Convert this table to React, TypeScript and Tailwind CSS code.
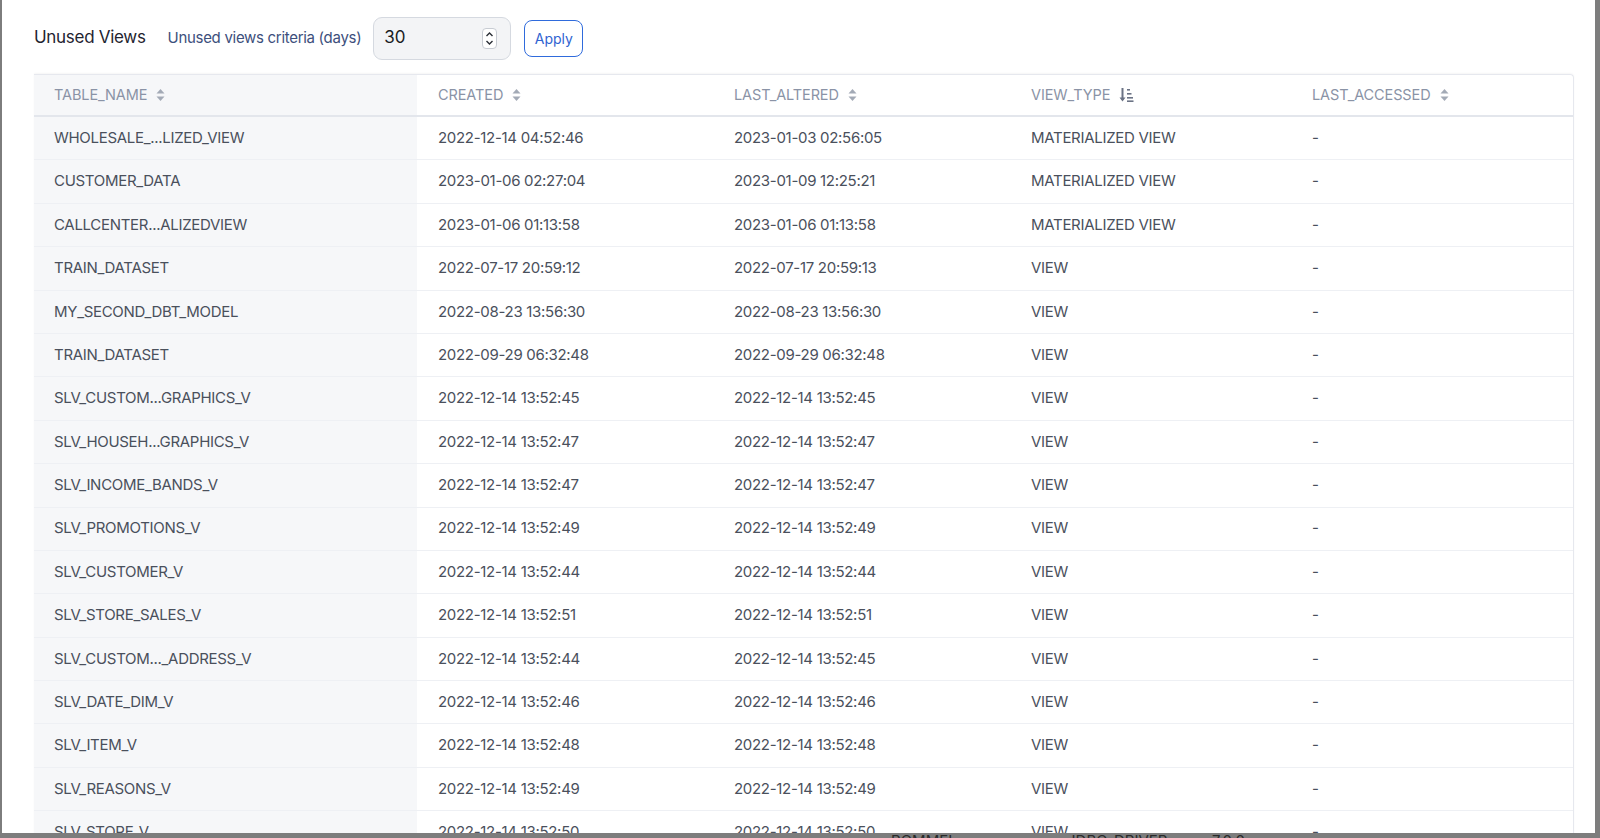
import React from 'react';

type Row = {
  name: string;
  created: string;
  altered: string;
  type: string;
  accessed: string;
};

const rows: Row[] = [
  { name: 'WHOLESALE_...LIZED_VIEW', created: '2022-12-14 04:52:46', altered: '2023-01-03 02:56:05', type: 'MATERIALIZED VIEW', accessed: '-' },
  { name: 'CUSTOMER_DATA', created: '2023-01-06 02:27:04', altered: '2023-01-09 12:25:21', type: 'MATERIALIZED VIEW', accessed: '-' },
  { name: 'CALLCENTER...ALIZEDVIEW', created: '2023-01-06 01:13:58', altered: '2023-01-06 01:13:58', type: 'MATERIALIZED VIEW', accessed: '-' },
  { name: 'TRAIN_DATASET', created: '2022-07-17 20:59:12', altered: '2022-07-17 20:59:13', type: 'VIEW', accessed: '-' },
  { name: 'MY_SECOND_DBT_MODEL', created: '2022-08-23 13:56:30', altered: '2022-08-23 13:56:30', type: 'VIEW', accessed: '-' },
  { name: 'TRAIN_DATASET', created: '2022-09-29 06:32:48', altered: '2022-09-29 06:32:48', type: 'VIEW', accessed: '-' },
  { name: 'SLV_CUSTOM...GRAPHICS_V', created: '2022-12-14 13:52:45', altered: '2022-12-14 13:52:45', type: 'VIEW', accessed: '-' },
  { name: 'SLV_HOUSEH...GRAPHICS_V', created: '2022-12-14 13:52:47', altered: '2022-12-14 13:52:47', type: 'VIEW', accessed: '-' },
  { name: 'SLV_INCOME_BANDS_V', created: '2022-12-14 13:52:47', altered: '2022-12-14 13:52:47', type: 'VIEW', accessed: '-' },
  { name: 'SLV_PROMOTIONS_V', created: '2022-12-14 13:52:49', altered: '2022-12-14 13:52:49', type: 'VIEW', accessed: '-' },
  { name: 'SLV_CUSTOMER_V', created: '2022-12-14 13:52:44', altered: '2022-12-14 13:52:44', type: 'VIEW', accessed: '-' },
  { name: 'SLV_STORE_SALES_V', created: '2022-12-14 13:52:51', altered: '2022-12-14 13:52:51', type: 'VIEW', accessed: '-' },
  { name: 'SLV_CUSTOM..._ADDRESS_V', created: '2022-12-14 13:52:44', altered: '2022-12-14 13:52:45', type: 'VIEW', accessed: '-' },
  { name: 'SLV_DATE_DIM_V', created: '2022-12-14 13:52:46', altered: '2022-12-14 13:52:46', type: 'VIEW', accessed: '-' },
  { name: 'SLV_ITEM_V', created: '2022-12-14 13:52:48', altered: '2022-12-14 13:52:48', type: 'VIEW', accessed: '-' },
  { name: 'SLV_REASONS_V', created: '2022-12-14 13:52:49', altered: '2022-12-14 13:52:49', type: 'VIEW', accessed: '-' },
  { name: 'SLV_STORE_V', created: '2022-12-14 13:52:50', altered: '2022-12-14 13:52:50', type: 'VIEW', accessed: '-' },
];

const SortIcon = () => (
  <svg width="9" height="14" viewBox="0 0 9 14" className="ml-[9px] shrink-0">
    <path d="M4.5 1 L8.5 5.5 H0.5 Z" fill="#a3aab6" />
    <path d="M4.5 13 L8.5 8.5 H0.5 Z" fill="#a3aab6" />
  </svg>
);

const SortDescIcon = () => (
  <svg width="15" height="16" viewBox="0 0 15 16" className="ml-[9px] shrink-0">
    <path d="M3.5 1 V13" stroke="#6b7385" strokeWidth="2" />
    <path d="M0.5 10.5 L3.5 14.5 L6.5 10.5 Z" fill="#6b7385" />
    <rect x="8" y="2" width="3" height="1.6" fill="#6b7385" />
    <rect x="8" y="6" width="4.5" height="1.6" fill="#6b7385" />
    <rect x="8" y="10" width="6" height="1.6" fill="#6b7385" />
    <rect x="8" y="13.4" width="6.5" height="1.6" fill="#6b7385" />
  </svg>
);

const cols = ['w-[383px]', 'w-[297px]', 'w-[297px]', 'w-[281px]', 'flex-1'];

const App: React.FC = () => {
  return (
    <div
      className="w-[1600px] h-[838px] overflow-hidden flex flex-col bg-[#7d7d7d]"
      style={{ fontFamily: 'Inter, "Noto Sans", sans-serif' }}
    >
      <div className="flex-1 min-h-0 ml-[2px] mr-[5px] bg-white overflow-hidden flex flex-col">
        {/* toolbar */}
        <div className="shrink-0 flex items-center h-[74px] pl-[32px] pt-[2px]">
          <span className="text-[17px] text-[#1f2430] tracking-[-0.3px]">Unused Views</span>
          <span className="ml-[22px] text-[15px] text-[#3d4f7c] tracking-[-0.3px]">Unused views criteria (days)</span>
          <div className="ml-[12px] w-[138px] h-[43px] rounded-[9px] border border-[#d5d9e0] bg-[#f3f4f6] flex items-center pl-[10px] pr-[13px]">
            <span className="flex-1 text-[17px] text-[#1a1d24]">30</span>
            <div className="w-[15px] h-[21px] rounded-[4px] border border-[#c8ccd3] bg-white flex flex-col items-center justify-center">
              <svg width="9" height="17" viewBox="0 0 9 17">
                <path d="M1.5 6 L4.5 3 L7.5 6" stroke="#2a2e36" strokeWidth="1.4" fill="none" />
                <path d="M1.5 11 L4.5 14 L7.5 11" stroke="#2a2e36" strokeWidth="1.4" fill="none" />
              </svg>
            </div>
          </div>
          <button className="ml-[13px] w-[59px] h-[37px] rounded-[8px] border border-[#2f6bdc] text-[#2f63d1] text-[14px] bg-white">
            Apply
          </button>
        </div>

        {/* table */}
        <div className="shrink-0 ml-[32px] mr-[21px] border-t border-r border-[#e6e8ee] rounded-tr-[4px] shadow-[0_-1px_2px_rgba(0,0,0,0.04)]">
          <div className="flex h-[42px] border-b-2 border-[#e3e6ec] text-[14.5px] text-[#8a93a6] tracking-[-0.1px]">
            <div className={`${cols[0]} bg-[#f6f7f9] flex items-center pl-[20px]`}>
              TABLE_NAME <SortIcon />
            </div>
            <div className={`${cols[1]} flex items-center pl-[21px]`}>
              CREATED <SortIcon />
            </div>
            <div className={`${cols[2]} flex items-center pl-[20px]`}>
              LAST_ALTERED <SortIcon />
            </div>
            <div className={`${cols[3]} flex items-center pl-[20px]`}>
              VIEW_TYPE <SortDescIcon />
            </div>
            <div className={`${cols[4]} flex items-center pl-[20px]`}>
              LAST_ACCESSED <SortIcon />
            </div>
          </div>
          {rows.map((r, i) => (
            <div key={i} className="flex h-[43.4px] border-b border-[#eef0f4] text-[15px] text-[#4a505c] tracking-[-0.3px]">
              <div className={`${cols[0]} bg-[#f6f7f9] flex items-center pl-[20px]`}>{r.name}</div>
              <div className={`${cols[1]} flex items-center pl-[21px]`}>{r.created}</div>
              <div className={`${cols[2]} flex items-center pl-[20px]`}>{r.altered}</div>
              <div className={`${cols[3]} flex items-center pl-[20px]`}>{r.type}</div>
              <div className={`${cols[4]} flex items-center pl-[20px]`}>{r.accessed}</div>
            </div>
          ))}
        </div>
      </div>

      {/* underlying page peeking out below */}
      <div className="h-[5px] shrink-0 overflow-hidden relative bg-[#7d7d7d]">
        <div className="absolute top-0 left-[891px] text-[15px] leading-[15px] text-[#2a2a2a]">ROMMEL</div>
        <div className="absolute top-0 left-[1067px] text-[15px] leading-[15px] text-[#2a2a2a]">JDBC_DRIVER</div>
        <div className="absolute top-0 left-[1212px] text-[15px] leading-[15px] text-[#2a2a2a]">7.0.0</div>
      </div>
    </div>
  );
};

export default App;
